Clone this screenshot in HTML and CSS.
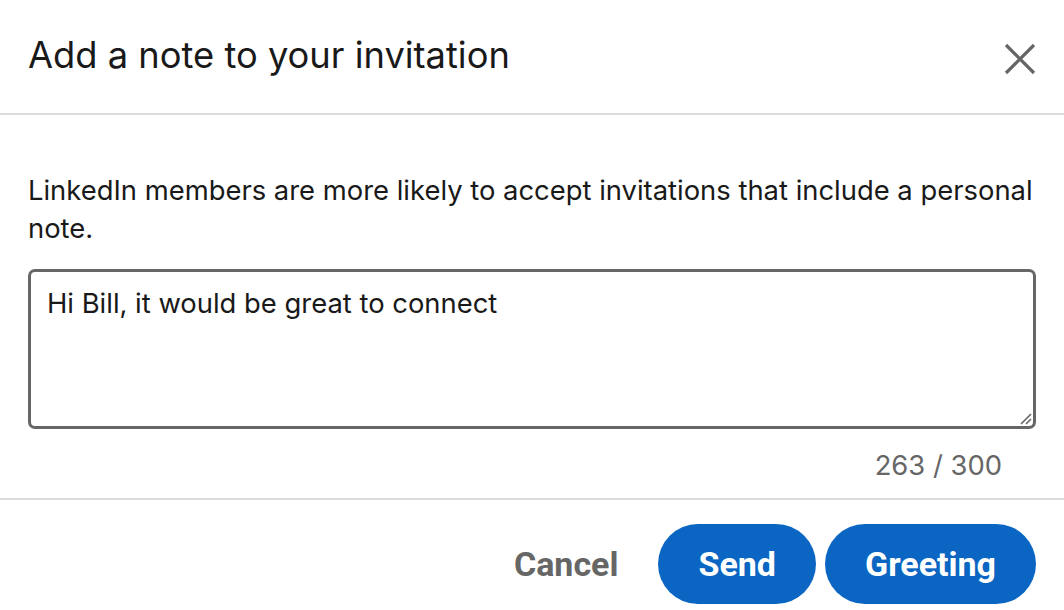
FILE: index.html
```html
<!DOCTYPE html>
<html>
<head>
<meta charset="utf-8">
<link rel="stylesheet" href="styles.css">
</head>
<body>
<div class="modal">
  <header class="modal-header">
    <h2 class="title">Add a note to your invitation</h2>
    <button class="close" aria-label="Dismiss">
      <svg width="34" height="34" viewBox="0 0 34 34"><path d="M3 3 L31 31 M31 3 L3 31" stroke="#666" stroke-width="3.2" fill="none"/></svg>
    </button>
  </header>
  <section class="modal-body">
    <p class="hint">LinkedIn members are more likely to accept invitations that include a personal note.</p>
    <div class="field">Hi Bill, it would be great to connect
      <svg class="grip" width="14" height="14" viewBox="0 0 14 14"><path d="M2 12 L12 2 M7 12 L12 7" stroke="#666" stroke-width="1.6" fill="none"/></svg>
    </div>
    <div class="count">263 / 300</div>
  </section>
  <footer class="modal-footer">
    <button class="btn-text">Cancel</button>
    <button class="btn-primary">Send</button>
    <button class="btn-primary">Greeting</button>
  </footer>
</div>
</body>
</html>
```
FILE: styles.css
```css
html, body { margin: 0; padding: 0; background: #fff; }
body { font-family: Inter, "Noto Sans", sans-serif; color: #191919; width: 1064px; height: 610px; overflow: hidden; }
.modal { width: 1064px; }
.modal-header { display: flex; align-items: center; justify-content: space-between; height: 113px; border-bottom: 2px solid #dcdcdc; padding: 0 28px; box-sizing: content-box; }
.title { margin: 0; font-weight: 400; font-size: 36.3px; padding-bottom: 4px; }
.close { background: none; border: 0; padding: 0; margin-right: -1px; width: 34px; height: 34px; margin-top: 4px; }
.close svg { display: block; }
.modal-body { padding: 56px 28px 0; }
.hint { margin: 0; font-size: 27.4px; line-height: 38px; }
.field { position: relative; margin-top: 22px; height: 160px; border: 3px solid #666; border-radius: 7px; padding: 13px 16px; box-sizing: border-box; font-size: 27.4px; line-height: 36px; }
.grip { position: absolute; right: 0; bottom: 0; }
.count { text-align: right; padding-right: 34px; font-size: 27.4px; color: #666; margin-top: 16px; height: 53px; line-height: 40px; }
.modal-footer { border-top: 2px solid #dcdcdc; display: flex; justify-content: flex-end; align-items: center; gap: 9px; padding: 24px 28px 0; }
button { font-family: Roboto, "Noto Sans", sans-serif; cursor: pointer; }
.btn-text { background: none; border: 0; font-size: 34px; font-weight: 700; color: #666; padding: 0 20px; height: 80px; margin-right: 11px; }
.btn-primary { background: #0a66c2; color: #fff; border: 0; border-radius: 40px; height: 80px; font-size: 34px; font-weight: 700; padding: 0 40px; }
```
